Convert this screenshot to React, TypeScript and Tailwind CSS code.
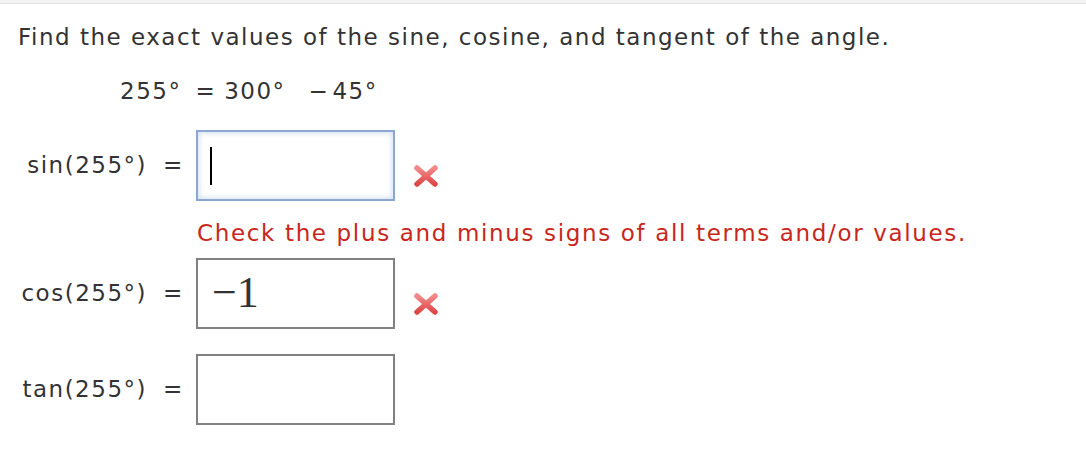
import React from 'react';

const XMark = () => (
  <svg width="28" height="24" viewBox="0 0 28 24" className="shrink-0">
    <defs>
      <linearGradient id="xg" x1="0" y1="0" x2="0" y2="1">
        <stop offset="0" stopColor="#f38a8a" />
        <stop offset="1" stopColor="#de4848" />
      </linearGradient>
    </defs>
    <path d="M5 4 L23 20 M23 4 L5 20" stroke="url(#xg)" strokeWidth="5.5" strokeLinecap="round" />
  </svg>
);

const Row = ({ label, children, mark }: { label: string; children?: React.ReactNode; mark?: boolean }) => (
  <div className="flex items-center h-[71px]">
    <div className="w-[129px] text-right text-[#333] whitespace-nowrap">{label}</div>
    <div className="w-[49px] pl-[16px] text-[#333]">=</div>
    {children}
    {mark && (
      <div className="ml-[17px] mt-[20px]">
        <XMark />
      </div>
    )}
  </div>
);

export default function App() {
  return (
    <div className="w-[1086px] h-[456px] bg-white overflow-hidden text-[23px] tracking-[1.5px] text-[#333]" style={{ fontFamily: '"DejaVu Sans", Verdana, sans-serif' }}>
      <div className="h-[3px] bg-[#f3f3f3] border-b border-[#e2e2e2] box-content" />
      <div className="pl-[18px] pt-[18px]">
        <p className="leading-[30px] whitespace-nowrap">Find the exact values of the sine, cosine, and tangent of the angle.</p>
        <p className="leading-[30px] mt-[24px] pl-[102px] whitespace-nowrap">
          255°<span className="ml-[14px]">=</span>
          <span className="ml-[8px]">300°</span>
          <span className="ml-[23px]">−</span>
          <span className="ml-[3px]">45°</span>
        </p>

        <div className="mt-[24px]">
          <Row label="sin(255°)" mark>
            <div className="w-[199px] h-[71px] border-2 border-[#8da8d0] shadow-[inset_0_0_6px_rgba(120,160,220,0.45)] pl-[12px] pt-[15px]">
              <div className="w-[2px] h-[38px] bg-black" />
            </div>
          </Row>
          <p className="ml-[179px] mt-[17px] text-[#c9261c] leading-[30px] tracking-[1.65px] whitespace-nowrap">Check the plus and minus signs of all terms and/or values.</p>
          <div className="mt-[10px]">
            <Row label="cos(255°)" mark>
              <div className="w-[199px] h-[71px] border-2 border-[#808080] pl-[14px] pb-[2px] flex items-center text-[44px] tracking-normal text-[#333]" style={{ fontFamily: '"Liberation Serif", serif' }}>
                −1
              </div>
            </Row>
          </div>
          <div className="mt-[25px]">
            <Row label="tan(255°)">
              <div className="w-[199px] h-[71px] border-2 border-[#808080]" />
            </Row>
          </div>
        </div>
      </div>
    </div>
  );
}
